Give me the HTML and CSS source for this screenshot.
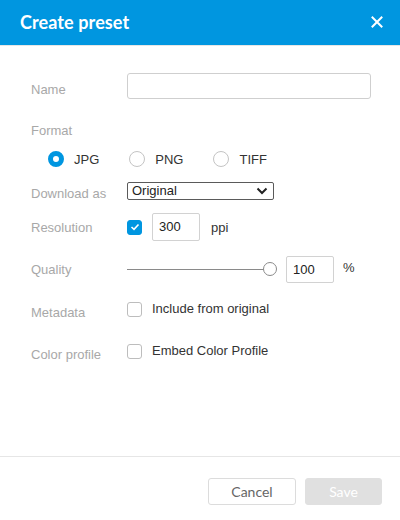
FILE: index.html
```html
<!DOCTYPE html>
<html>
<head>
<meta charset="utf-8">
<link rel="stylesheet" href="styles.css">
</head>
<body>
<div class="dialog">
  <header class="header">
    <h1 class="title">Create preset</h1>
    <svg class="close" width="12" height="12" viewBox="0 0 12 12"><path d="M1.5 1.5 L10.5 10.5 M10.5 1.5 L1.5 10.5" stroke="#fff" stroke-width="2" stroke-linecap="square"/></svg>
  </header>
  <main class="content">
    <div class="row row-name">
      <span class="label lower">Name</span>
      <div class="text-input wide"></div>
    </div>
    <div class="section-label">Format</div>
    <div class="radios">
      <span class="radio checked"></span><span class="opt">JPG</span>
      <span class="radio"></span><span class="opt">PNG</span>
      <span class="radio"></span><span class="opt">TIFF</span>
    </div>
    <div class="row row-select">
      <span class="label lower">Download as</span>
      <div class="select"><span>Original</span>
        <svg width="12" height="8" viewBox="0 0 12 8"><path d="M1.5 1.5 L6 6 L10.5 1.5" fill="none" stroke="#222" stroke-width="2"/></svg>
      </div>
    </div>
    <div class="row row-res">
      <span class="label">Resolution</span>
      <span class="checkbox checked"><svg width="10" height="8" viewBox="0 0 10 8"><path d="M1.5 4 L4 6.3 L8.5 1.5" fill="none" stroke="#fff" stroke-width="1.6"/></svg></span>
      <div class="num-input">300</div>
      <span class="unit">ppi</span>
    </div>
    <div class="row row-quality">
      <span class="label">Quality</span>
      <div class="slider"><span class="track"></span><span class="thumb"></span></div>
      <div class="num-input q">100</div>
      <span class="unit pct">%</span>
    </div>
    <div class="row row-check">
      <span class="label lower">Metadata</span>
      <span class="checkbox"></span>
      <span class="check-text">Include from original</span>
    </div>
    <div class="row row-check row-profile">
      <span class="label lower">Color profile</span>
      <span class="checkbox"></span>
      <span class="check-text">Embed Color Profile</span>
    </div>
  </main>
  <footer class="footer">
    <button class="btn cancel">Cancel</button>
    <button class="btn save">Save</button>
  </footer>
</div>
</body>
</html>
```

FILE: styles.css
```css
* { box-sizing: border-box; }
html, body { margin: 0; padding: 0; background: #fff; }
body { width: 400px; height: 520px; font-family: "Liberation Sans", Arial, sans-serif; font-size: 13px; color: #333; }
.dialog { display: flex; flex-direction: column; height: 520px; }

.header {
  height: 46px;
  background: #0096e0;
  border-bottom: 1px solid #e6e6e6;
  display: flex;
  align-items: center;
  justify-content: space-between;
  padding: 0 17px 1px 20px;
}
.title {
  margin: 0;
  font-family: Lato, "Open Sans", sans-serif;
  font-weight: 700;
  font-size: 18px;
  color: #fff;
  letter-spacing: 0.1px;
}
.close { display: block; }

.content {
  height: 410px;
  padding: 27px 0 0 31px;
}
.row { display: flex; align-items: center; }
.label { width: 96px; color: #a8a8a8; flex-shrink: 0; }
.label.lower { padding-top: 6px; }

.row-name { height: 26px; }
.text-input.wide { width: 244px; height: 26px; border: 1px solid #cfcfcf; border-radius: 3px; }

.section-label { color: #a8a8a8; margin-top: 24px; height: 16px; line-height: 16px; }

.radios { display: flex; align-items: center; height: 20px; margin-top: 10px; padding-left: 17px; }
.radio { width: 16px; height: 16px; border-radius: 50%; border: 1px solid #c4c4c4; flex-shrink: 0; }
.radio.checked { border: 5px solid #0096e0; background: #fff; }
.opt { margin-left: 10px; margin-right: 30px; font-size: 13px; color: #333; }

.row-select { margin-top: 13px; height: 17px; }
.select {
  width: 147px; height: 18px;
  border: 1px solid #5a5a5a; border-radius: 2px;
  display: flex; align-items: center; justify-content: space-between;
  padding: 0 5px 0 4px;
  color: #222;
}
.select svg { display: block; }

.row-res { margin-top: 14px; height: 28px; }
.checkbox {
  width: 15px; height: 15px; border: 1px solid #bdbdbd; border-radius: 3px;
  display: flex; align-items: center; justify-content: center; flex-shrink: 0;
}
.checkbox.checked { background: #0096e0; border-color: #0096e0; }
.checkbox svg { display: block; }
.num-input {
  width: 48px; height: 28px; margin-left: 10px;
  border: 1px solid #d2d2d2; border-radius: 2px;
  padding-left: 6px; line-height: 26px; color: #222;
}
.unit { margin-left: 11px; color: #333; }

.row-quality { margin-top: 15px; height: 26px; }
.slider { display: flex; align-items: center; width: 150px; }
.track { width: 137px; height: 1px; background: #8a8a8a; }
.thumb { width: 14px; height: 14px; border: 1px solid #8a8a8a; border-radius: 50%; background: #fff; margin-left: -1px; }
.num-input.q { margin-left: 9px; height: 27px; width: 48px; }
.pct { margin-left: 9px; margin-top: -3px; }

.row-check { margin-top: 18px; height: 18px; }
.row-profile { margin-top: 24px; }
.check-text { margin-left: 10px; color: #333; margin-top: -2px; }

.footer {
  border-top: 1px solid #e6e6e6;
  flex: 1;
  display: flex;
  justify-content: flex-end;
  align-items: flex-start;
  padding: 21px 18px 0 0;
  gap: 9px;
}
.btn {
  height: 27px;
  border-radius: 3px;
  font-family: Lato, "Open Sans", sans-serif;
  font-size: 14px;
  padding: 0;
}
.cancel { width: 88px; background: #fff; border: 1px solid #dcdcdc; color: #666; }
.save { width: 77px; background: #e0e0e0; border: 1px solid #e0e0e0; color: #fff; }
```
